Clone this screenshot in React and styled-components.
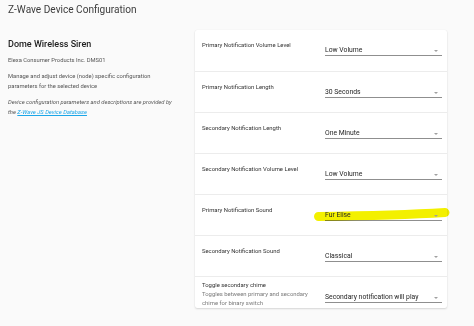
import React from "react";
import styled, { createGlobalStyle } from "styled-components";

const Global = createGlobalStyle`
  html, body { margin: 0; padding: 0; background: #fafafa; }
  body { font-family: Roboto, "Noto Sans", "Liberation Sans", sans-serif; -webkit-font-smoothing: antialiased; }
  * { box-sizing: border-box; }
`;

const Page = styled.div`
  width: 474px;
  height: 326px;
  overflow: hidden;
  background: #fafafa;
`;

const Header = styled.header`
  height: 30px;
  padding: 3px 8px 0;
  font-size: 10.1px;
  line-height: 14px;
  color: #3d3d3d;
  font-weight: 400;
`;

const Main = styled.div`
  display: flex;
  align-items: flex-start;
  padding: 0 8px;
  gap: 9px;
`;

const Intro = styled.div`
  width: 178px;
  padding-top: 8px;
`;

const DeviceName = styled.h2`
  margin: 0 0 5px;
  font-size: 9px;
  line-height: 12px;
  font-weight: 500;
  color: #222;
`;

const Para = styled.p`
  margin: 0 0 6px;
  font-size: 5.8px;
  line-height: 10px;
  color: #555;
  font-style: ${(p) => (p.$italic ? "italic" : "normal")};
`;

const Link = styled.a`
  color: #1ba6e8;
  text-decoration: underline;
`;

const Card = styled.div`
  width: 252px;
  background: #fff;
  border-radius: 2px;
  box-shadow: 0 1px 2px rgba(0, 0, 0, 0.14), 0 0 1px rgba(0, 0, 0, 0.08);
`;

const Row = styled.div`
  display: grid;
  grid-template-columns: 1fr 117px;
  column-gap: 5px;
  height: ${(p) => p.$h}px;
  padding: 0 5px 0 7px;
  border-top: ${(p) => (p.$first ? "none" : "1px solid #ececec")};
`;

const Label = styled.div`
  padding-top: ${(p) => p.$top}px;
  font-size: 5.9px;
  line-height: 8.5px;
  color: #333;
`;

const Desc = styled.div`
  color: #7a7a7a;
  font-size: 5.9px;
  line-height: 9px;
  margin-top: 0.5px;
`;

const Field = styled.div`
  position: relative;
  margin-top: 15px;
  height: 11px;
  border-bottom: 1px solid #8f8f8f;
  display: flex;
  align-items: center;
  justify-content: space-between;
  padding-right: 4px;
  font-size: 6.8px;
  line-height: 10px;
  color: #262626;
`;

const Value = styled.span`
  position: relative;
  z-index: 1;
`;

const Arrow = styled.span`
  width: 0;
  height: 0;
  border-left: 2px solid transparent;
  border-right: 2px solid transparent;
  border-top: 2px solid #a0a0a0;
  margin-top: 1px;
  position: relative;
  z-index: 1;
`;

const Highlight = styled.svg`
  position: absolute;
  left: -11px;
  top: -3px;
  width: 136px;
  height: 14px;
  mix-blend-mode: multiply;
`;

const rows = [
  { label: "Primary Notification Volume Level", value: "Low Volume" },
  { label: "Primary Notification Length", value: "30 Seconds" },
  { label: "Secondary Notification Length", value: "One Minute" },
  { label: "Secondary Notification Volume Level", value: "Low Volume" },
  { label: "Primary Notification Sound", value: "Fur Elise", marked: true },
  { label: "Secondary Notification Sound", value: "Classical" },
  {
    label: "Toggle secondary chime",
    desc: "Toggles between primary and secondary chime for binary switch",
    value: "Secondary notification will play",
  },
];

export default function App() {
  return (
    <Page>
      <Global />
      <Header>Z-Wave Device Configuration</Header>
      <Main>
        <Intro>
          <DeviceName>Dome Wireless Siren</DeviceName>
          <Para>Elexa Consumer Products Inc. DMS01</Para>
          <Para>
            Manage and adjust device (node) specific configuration
            <br />
            parameters for the selected device
          </Para>
          <Para $italic>
            Device configuration parameters and descriptions are provided by
            <br />
            the <Link href="#">Z-Wave JS Device Database</Link>
          </Para>
        </Intro>
        <Card>
          {rows.map((r, i) => (
            <Row key={i} $first={i === 0} $h={r.desc ? 32 : 41}>
              <Label $top={r.desc ? 4 : 11}>
                {r.label}
                {r.desc && <Desc>{r.desc}</Desc>}
              </Label>
              <Field>
                {r.marked && (
                  <Highlight viewBox="0 0 136 14">
                    <path
                      d="M4.5 9.5 C 40 9, 90 8, 131 5.5"
                      stroke="#f3f000"
                      strokeWidth="9"
                      strokeLinecap="round"
                      fill="none"
                    />
                  </Highlight>
                )}
                <Value>{r.value}</Value>
                <Arrow />
              </Field>
            </Row>
          ))}
        </Card>
      </Main>
    </Page>
  );
}
